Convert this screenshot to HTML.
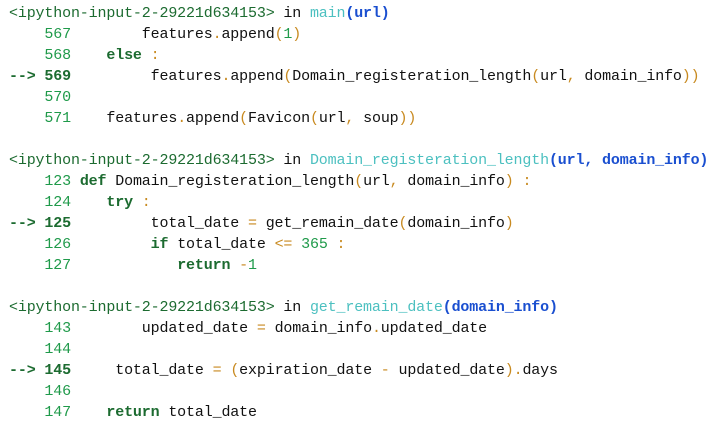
<!DOCTYPE html>
<html><head><style>
body{margin:0;background:#fff;width:721px;height:427px;overflow:hidden}
pre{margin:0;padding:3px 0 0 9px;font-family:"Liberation Mono",monospace;font-size:15px;line-height:21px;color:#111;letter-spacing:-0.15px}
.h{color:#1c6b30}.n{color:#1f9a4a}.c{color:#1c6b30;font-weight:bold}
.f{color:#4cc0c0}.a{color:#1a4fd0;font-weight:bold}.o{color:#c88a20}
.k{color:#1c6b30;font-weight:bold}.num{color:#1f9a4a}
</style></head><body><pre><span class="h">&lt;ipython-input-2-29221d634153&gt;</span> in <span class="f">main</span><span class="a">(url)</span>
<span class="n">    567</span>        features<span class="o">.</span>append<span class="o">(</span><span class="num">1</span><span class="o">)</span>
<span class="n">    568</span>    <span class="k">else</span> <span class="o">:</span>
<span class="c">--&gt; 569</span>         features<span class="o">.</span>append<span class="o">(</span>Domain_registeration_length<span class="o">(</span>url<span class="o">,</span> domain_info<span class="o">))</span>
<span class="n">    570</span>
<span class="n">    571</span>    features<span class="o">.</span>append<span class="o">(</span>Favicon<span class="o">(</span>url<span class="o">,</span> soup<span class="o">))</span>

<span class="h">&lt;ipython-input-2-29221d634153&gt;</span> in <span class="f">Domain_registeration_length</span><span class="a">(url, domain_info)</span>
<span class="n">    123</span> <span class="k">def</span> Domain_registeration_length<span class="o">(</span>url<span class="o">,</span> domain_info<span class="o">)</span> <span class="o">:</span>
<span class="n">    124</span>    <span class="k">try</span> <span class="o">:</span>
<span class="c">--&gt; 125</span>         total_date <span class="o">=</span> get_remain_date<span class="o">(</span>domain_info<span class="o">)</span>
<span class="n">    126</span>         <span class="k">if</span> total_date <span class="o">&lt;=</span> <span class="num">365</span> <span class="o">:</span>
<span class="n">    127</span>            <span class="k">return</span> <span class="o">-</span><span class="num">1</span>

<span class="h">&lt;ipython-input-2-29221d634153&gt;</span> in <span class="f">get_remain_date</span><span class="a">(domain_info)</span>
<span class="n">    143</span>        updated_date <span class="o">=</span> domain_info<span class="o">.</span>updated_date
<span class="n">    144</span>
<span class="c">--&gt; 145</span>     total_date <span class="o">=</span> <span class="o">(</span>expiration_date <span class="o">-</span> updated_date<span class="o">).</span>days
<span class="n">    146</span>
<span class="n">    147</span>    <span class="k">return</span> total_date
</pre></body></html>
